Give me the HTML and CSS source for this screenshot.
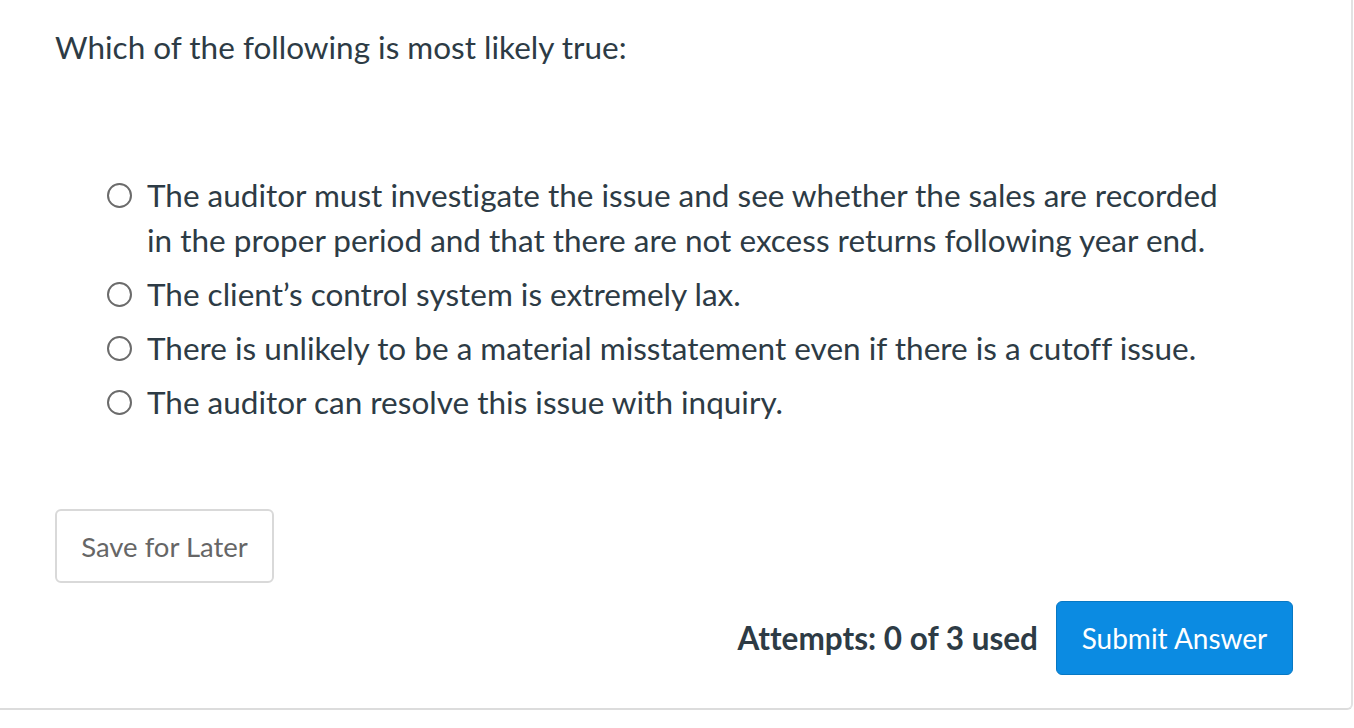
FILE: index.html
```html
<!DOCTYPE html>
<html>
<head>
<meta charset="utf-8">
<link rel="stylesheet" href="styles.css">
</head>
<body>
<div class="card">
  <div class="question">Which of the following is most likely true:</div>
  <ul class="options">
    <li class="option"><span class="radio"></span><span class="label">The auditor must investigate the issue and see whether the sales are recorded in the proper period and that there are not excess returns following year end.</span></li>
    <li class="option"><span class="radio"></span><span class="label">The client’s control system is extremely lax.</span></li>
    <li class="option"><span class="radio"></span><span class="label">There is unlikely to be a material misstatement even if there is a cutoff issue.</span></li>
    <li class="option"><span class="radio"></span><span class="label">The auditor can resolve this issue with inquiry.</span></li>
  </ul>
  <div class="save-row"><button class="btn-save">Save for Later</button></div>
  <div class="submit-row">
    <span class="attempts">Attempts: 0 of 3 used</span>
    <button class="btn-submit">Submit Answer</button>
  </div>
</div>
</body>
</html>
```
FILE: styles.css
```css
html, body {
  margin: 0;
  padding: 0;
  background: #ffffff;
}
body {
  font-family: Lato, "Open Sans", sans-serif;
  font-variant-ligatures: none;
  color: #2d3b45;
}
.card {
  box-sizing: border-box;
  width: 1353px;
  height: 710px;
  border-right: 2px solid #e2e2e2;
  border-bottom: 2px solid #dcdcdc;
  border-bottom-right-radius: 6px;
  padding: 25px 58px 0 55px;
}
.question {
  font-size: 31.5px;
  line-height: 45px;
}
.options {
  list-style: none;
  margin: 103px 0 0 52px;
  padding: 0;
  width: 1130px;
}
.option {
  display: flex;
  align-items: flex-start;
  font-size: 31.5px;
  line-height: 45px;
  margin-bottom: 9px;
}
.radio {
  flex: none;
  box-sizing: border-box;
  width: 25px;
  height: 25px;
  border: 2px solid #6b6b6b;
  border-radius: 50%;
  margin: 10px 15px 0 0;
}
.save-row {
  margin-top: 84px;
}
.btn-save {
  box-sizing: border-box;
  width: 219px;
  height: 74px;
  background: #ffffff;
  border: 2px solid #d9d9d9;
  border-radius: 6px;
  font-family: Lato, sans-serif;
  font-variant-ligatures: none;
  font-size: 27.5px;
  color: #666666;
  padding: 0;
}
.submit-row {
  display: flex;
  justify-content: flex-end;
  align-items: center;
  gap: 18px;
  margin-top: 18px;
}
.attempts {
  font-size: 31.5px;
  font-weight: bold;
  color: #2d3b45;
}
.btn-submit {
  box-sizing: border-box;
  width: 237px;
  height: 74px;
  background: #0b8be2;
  border: 1px solid #0778c4;
  border-radius: 6px;
  color: #ffffff;
  font-family: Lato, sans-serif;
  font-variant-ligatures: none;
  font-size: 28px;
  padding: 0;
}
```
